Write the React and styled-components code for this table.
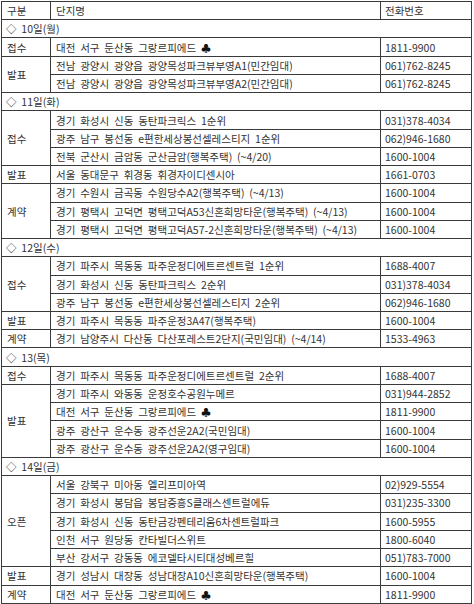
import React from 'react';
import styled, { createGlobalStyle } from 'styled-components';

const GlobalStyle = createGlobalStyle`
  html, body {
    margin: 0;
    padding: 0;
    background: #ffffff;
  }
  body {
    font-family: "Noto Sans CJK KR", "Noto Sans", sans-serif;
  }
`;

const Page = styled.div`
  padding: 1px 0 0 1px;
  width: 474px;
  box-sizing: border-box;
`;

const Table = styled.table`
  width: 470px;
  height: 603px;
  border-collapse: collapse;
  table-layout: fixed;
  font-size: 10.5px;
  color: #333;
  letter-spacing: 0;
  word-spacing: 2.5px;
`;

const Cell = styled.td`
  border: 1px solid #3a3a3a;
  padding: 0 0 0 ${p => (p.$pad ? p.$pad : 5)}px;
  line-height: 15px;
  white-space: nowrap;
  overflow: hidden;
  vertical-align: middle;
  text-align: left;
  font-weight: normal;
`;

const Section = styled(Cell)`
  padding-left: 4px;
`;

const Club = styled.span`
  color: #111;
  font-size: 10px;
`;

const data = [
  {
    day: '10일(월)',
    groups: [
      { label: '접수', rows: [['대전 서구 둔산동 그랑르피에드', '1811-9900', true]] },
      {
        label: '발표',
        rows: [
          ['전남 광양시 광양읍 광양목성파크뷰부영A1(민간임대)', '061)762-8245'],
          ['전남 광양시 광양읍 광양목성파크뷰부영A2(민간임대)', '061)762-8245'],
        ],
      },
    ],
  },
  {
    day: '11일(화)',
    groups: [
      {
        label: '접수',
        rows: [
          ['경기 화성시 신동 동탄파크릭스 1순위', '031)378-4034'],
          ['광주 남구 봉선동 e편한세상봉선셀레스티지 1순위', '062)946-1680'],
          ['전북 군산시 금암동 군산금암(행복주택) (~4/20)', '1600-1004'],
        ],
      },
      { label: '발표', rows: [['서울 동대문구 휘경동 휘경자이디센시아', '1661-0703']] },
      {
        label: '계약',
        rows: [
          ['경기 수원시 금곡동 수원당수A2(행복주택) (~4/13)', '1600-1004'],
          ['경기 평택시 고덕면 평택고덕A53신혼희망타운(행복주택) (~4/13)', '1600-1004'],
          ['경기 평택시 고덕면 평택고덕A57-2신혼희망타운(행복주택) (~4/13)', '1600-1004'],
        ],
      },
    ],
  },
  {
    day: '12일(수)',
    groups: [
      {
        label: '접수',
        rows: [
          ['경기 파주시 목동동 파주운정디에트르센트럴 1순위', '1688-4007'],
          ['경기 화성시 신동 동탄파크릭스 2순위', '031)378-4034'],
          ['광주 남구 봉선동 e편한세상봉선셀레스티지 2순위', '062)946-1680'],
        ],
      },
      { label: '발표', rows: [['경기 파주시 목동동 파주운정3A47(행복주택)', '1600-1004']] },
      { label: '계약', rows: [['경기 남양주시 다산동 다산포레스트2단지(국민임대) (~4/14)', '1533-4963']] },
    ],
  },
  {
    day: '13(목)',
    groups: [
      { label: '접수', rows: [['경기 파주시 목동동 파주운정디에트르센트럴 2순위', '1688-4007']] },
      {
        label: '발표',
        rows: [
          ['경기 파주시 와동동 운정호수공원누메르', '031)944-2852'],
          ['대전 서구 둔산동 그랑르피에드', '1811-9900', true],
          ['광주 광산구 운수동 광주선운2A2(국민임대)', '1600-1004'],
          ['광주 광산구 운수동 광주선운2A2(영구임대)', '1600-1004'],
        ],
      },
    ],
  },
  {
    day: '14일(금)',
    groups: [
      {
        label: '오픈',
        rows: [
          ['서울 강북구 미아동 엘리프미아역', '02)929-5554'],
          ['경기 화성시 봉담읍 봉담중흥S클래스센트럴에듀', '031)235-3300'],
          ['경기 화성시 신동 동탄금강펜테리움6차센트럴파크', '1600-5955'],
          ['인천 서구 원당동 칸타빌더스위트', '1800-6040'],
          ['부산 강서구 강동동 에코델타시티대성베르힐', '051)783-7000'],
        ],
      },
      { label: '발표', rows: [['경기 성남시 대장동 성남대장A10신혼희망타운(행복주택)', '1600-1004']] },
      { label: '계약', rows: [['대전 서구 둔산동 그랑르피에드', '1811-9900', true]] },
    ],
  },
];

const GroupRows = ({ group }) =>
  group.rows.map(([name, phone, club], i) => (
    <tr key={i}>
      {i === 0 && <Cell rowSpan={group.rows.length}>{group.label}</Cell>}
      <Cell>
        {name}
        {club && <> <Club>♣</Club></>}
      </Cell>
      <Cell $pad={4}>{phone}</Cell>
    </tr>
  ));

export default function App() {
  return (
    <Page>
      <GlobalStyle />
      <Table>
        <colgroup>
          <col style={{ width: 49 }} />
          <col style={{ width: 330 }} />
          <col style={{ width: 91 }} />
        </colgroup>
        <tbody>
          <tr>
            <Cell as="th">구분</Cell>
            <Cell as="th">단지명</Cell>
            <Cell as="th" $pad={4}>전화번호</Cell>
          </tr>
          {data.map(section => (
            <React.Fragment key={section.day}>
              <tr>
                <Section colSpan={3}>◇ {section.day}</Section>
              </tr>
              {section.groups.map((g, gi) => (
                <GroupRows key={gi} group={g} />
              ))}
            </React.Fragment>
          ))}
        </tbody>
      </Table>
    </Page>
  );
}
